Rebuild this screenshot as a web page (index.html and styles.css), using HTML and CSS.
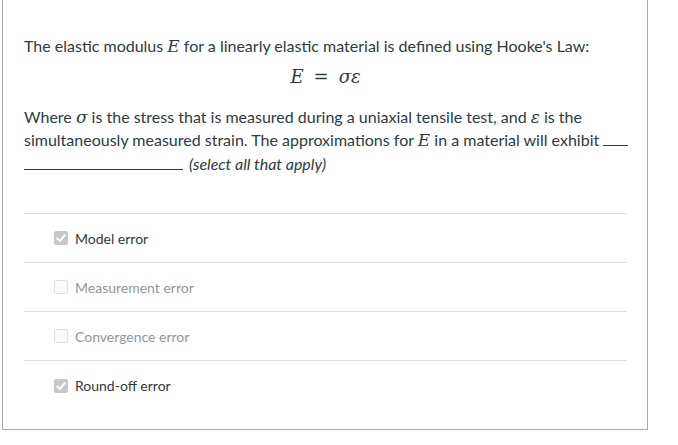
FILE: index.html
```html
<!DOCTYPE html>
<html>
<head>
<meta charset="utf-8">
<link rel="stylesheet" href="styles.css">
</head>
<body>
<div class="card">
  <div class="question">
    <p class="para">The elastic modulus <span class="mi">E</span> for a linearly elastic material is defined using Hooke's Law:</p>
    <p class="eq"><span class="mi">E</span><span class="mo">=</span><span class="mi">σε</span></p>
    <p class="para">Where <span class="mi">σ</span> is the stress that is measured during a uniaxial tensile test, and <span class="mi">ε</span> is the simultaneously measured strain. The approximations for <span class="mi">E</span> in a material will exhibit&nbsp;<span class="blank short"></span> <span class="blank long"></span><em class="hint">(select all that apply)</em></p>
  </div>
  <div class="answers">
    <div class="answer">
      <span class="box checked"><svg viewBox="0 0 14 14" width="14" height="14"><path d="M3.2 7.4 L5.9 10 L10.8 4.2" fill="none" stroke="#fff" stroke-width="2" stroke-linecap="round" stroke-linejoin="round"/></svg></span>
      <span class="label dark">Model error</span>
    </div>
    <div class="answer">
      <span class="box"></span>
      <span class="label light">Measurement error</span>
    </div>
    <div class="answer">
      <span class="box"></span>
      <span class="label light">Convergence error</span>
    </div>
    <div class="answer">
      <span class="box checked"><svg viewBox="0 0 14 14" width="14" height="14"><path d="M3.2 7.4 L5.9 10 L10.8 4.2" fill="none" stroke="#fff" stroke-width="2" stroke-linecap="round" stroke-linejoin="round"/></svg></span>
      <span class="label dark">Round-off error</span>
    </div>
  </div>
</div>
</body>
</html>
```
FILE: styles.css
```css
html, body {
  margin: 0;
  padding: 0;
  background: #fff;
}
body {
  font-family: Lato, "Open Sans", sans-serif;
  color: #2d3b45;
}
.card {
  margin: -1px 0 0 2px;
  height: 431px;
  border: 1px solid #aaaaaa;
  box-sizing: border-box;
  width: 646px;
  padding: 0 20px 0 21px;
}
.question {
  padding-top: 34px;
  font-size: 16px;
  line-height: 23.5px;
  margin-right: -6px;
}
.para {
  margin: 0;
}
.eq {
  margin: 7px 6px 16px 0;
  text-align: center;
  line-height: 24px;
}
.mi {
  font-family: "DejaVu Serif", "Liberation Serif", serif;
  font-style: italic;
  font-size: 17px;
  line-height: 1;
}
.eq .mi {
  font-size: 18px;
}
.mo {
  font-family: "DejaVu Serif", serif;
  font-size: 18px;
  line-height: 1;
  margin: 0 10px;
}
.blank {
  display: inline-block;
  border-bottom: 1px solid #2d3b45;
  vertical-align: baseline;
  height: 1px;
}
.blank.short { width: 25px; }
.blank.long { width: 159px; }
.hint {
  font-style: italic;
  margin-left: 6px;
}
.answers {
  margin-top: 38px;
  display: flex;
  flex-direction: column;
}
.answer {
  border-top: 1px solid #dddddd;
  height: 48px;
  display: flex;
  align-items: center;
  padding-left: 30px;
}
.answer:last-child {
  height: 49px;
}
.box {
  width: 14px;
  height: 14px;
  box-sizing: border-box;
  border: 1px solid #e0e0e0;
  border-radius: 2px;
  background: #fafafa;
  margin-right: 7px;
  display: flex;
}
.box.checked {
  background: #c8c8c8;
  border-color: #c8c8c8;
}
.box.checked svg {
  margin: -1px;
}
.label {
  font-size: 14px;
}
.label.dark { color: #2d3b45; }
.label.light { color: #8e979e; }
```
